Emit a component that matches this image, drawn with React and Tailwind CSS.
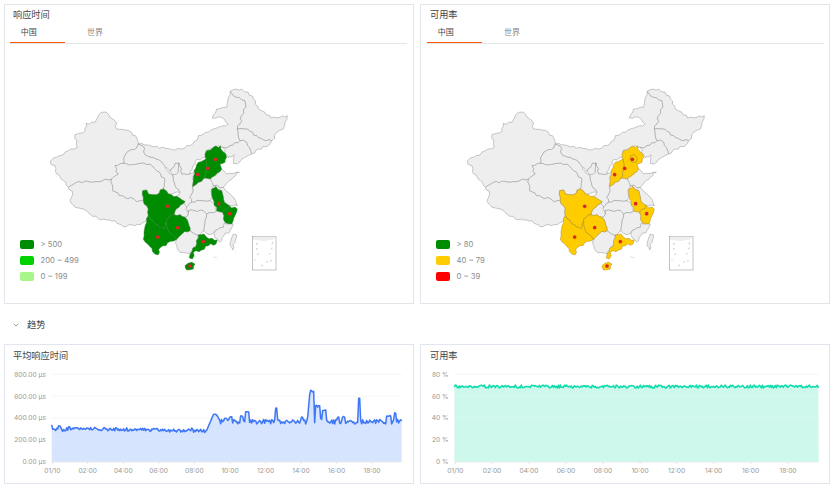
import React from 'react';
import { ChevronDown } from 'lucide-react';

const cjk = "font-['Inter','Noto_Sans_CJK_SC',sans-serif]";

// province outlines, coordinates are 3x page pixels
const provinces = {
  xinjiang: '152,480 160,472 178,465 205,450 232,440 225,402 255,392 258,368 285,365 292,352 305,335 318,334 330,350 345,360 350,385 375,388 395,395 410,412 415,430 410,442 388,450 375,465 370,488 345,495 355,520 335,535 280,545 262,542 230,545 205,560 190,540 170,520 165,495 152,490',
  tibet: '205,560 230,545 262,542 280,545 335,535 338,570 375,590 392,590 410,603 430,600 445,625 445,645 438,662 420,672 395,672 370,678 345,660 320,658 295,655 270,640 250,625 225,620 210,600 218,580',
  qinghai: '345,495 370,488 395,492 420,488 450,490 470,510 482,520 495,540 490,565 470,582 445,580 440,568 428,570 430,600 410,603 392,590 375,590 338,570 335,535 355,520',
  gansu: '375,465 388,450 410,442 415,430 428,435 435,462 460,470 478,478 490,490 503,510 518,522 525,555 540,575 520,578 505,580 490,565 495,540 482,520 470,510 450,490 420,488 395,492 370,488',
  ningxia: '525,488 537,487 535,515 555,522 556,545 540,553 525,550 528,530 518,522 510,512',
  inner: '415,430 470,437 515,447 545,445 570,435 592,418 595,405 625,395 640,385 660,378 685,370 665,350 637,352 650,325 680,320 685,290 690,272 700,285 735,300 738,320 725,345 720,370 712,385 720,420 690,435 680,442 668,440 655,435 632,445 618,450 615,470 585,482 570,520 545,520 537,487 525,488 510,512 490,490 478,478 460,470 435,462 428,435',
  heilongjiang: '690,272 702,266 725,265 745,275 760,295 775,325 795,335 812,352 840,350 862,345 855,365 850,385 830,395 815,420 790,418 770,405 750,392 735,385 712,385 720,370 725,345 738,320 735,300 700,285',
  jilin: '712,385 735,385 750,392 770,405 790,418 815,420 805,435 775,445 755,460 748,440 740,425 720,420',
  liaoning: '680,442 690,435 720,420 740,425 748,440 755,460 735,470 712,490 700,488 702,462 688,468 685,472 668,440',
  shaanxi: '537,487 545,520 570,520 582,515 577,558 580,570 570,590 575,605 558,625 532,612 545,597 530,587 540,575 525,555 518,522 535,515',
  henan: '577,558 590,552 612,532 632,535 640,556 632,570 636,590 630,600 600,600 575,605 570,590 580,570',
  hubei: '555,625 575,605 600,600 630,600 640,605 650,632 620,640 610,630 565,630 565,640',
  jiangsu: '640,555 670,560 690,580 702,592 712,615 688,615 673,605 665,570 648,558',
  shandong: '635,530 665,505 680,520 718,515 700,530 682,545 670,560 640,555 632,535',
  hunan: '565,640 565,630 610,630 620,640 615,668 612,690 595,705 570,690 565,668 555,650',
  jiangxi: '620,640 650,632 668,632 680,668 670,680 645,690 630,702 612,690 615,668',
  fujian: '672,668 700,670 690,690 672,705 660,725 645,710 645,690 670,680',
  guangxi: '528,710 548,698 570,690 595,705 595,725 570,760 540,755 530,735',
  chongqing: '528,625 555,602 558,625 565,640 555,650 540,642 522,642',
  taiwan: '700,700 710,703 705,725 698,748 690,735 695,712',
};

// highlighted provinces drawn over the grey ones
const active = {
  hebei: '620,450 640,440 662,435 668,452 680,470 675,485 660,490 665,505 645,525 630,535 612,532 620,500 618,475 615,460',
  shanxi: '618,475 620,500 612,532 605,542 578,558 580,535 582,510 595,485',
  sichuan: '428,570 440,568 445,580 470,582 490,565 505,580 530,587 555,602 528,625 522,642 508,650 500,662 492,685 478,680 460,660 445,645 445,625 430,600',
  guizhou: '522,642 540,642 555,650 565,668 570,690 548,698 530,716 515,700 505,690 500,662 508,650',
  yunnan: '445,645 460,660 478,680 492,685 500,662 505,690 515,700 530,716 512,722 498,735 482,740 475,762 462,758 450,738 430,716 432,695 440,665',
  guangdong: '595,702 612,700 620,710 652,718 648,730 625,735 605,748 580,755 577,775 568,772 572,758 590,730',
  hainan: '555,795 575,785 585,790 580,805 560,808',
  anhui: '648,558 665,570 673,605 688,615 668,635 650,630 638,595 635,565',
  zhejiang: '688,615 712,625 705,645 695,670 675,665 668,635',
};

const dots = [[646, 476], [623, 503], [593, 522], [503, 617], [533, 681], [473, 709], [610, 723], [656, 609], [689, 639], [570, 796]];

// adds small wiggles to each edge; keyed on the edge so neighbours share the same border
const wiggle = (points) => {
  const pts = points.split(' ').map((p) => p.split(',').map(Number));
  const out = [];
  pts.forEach((a, i) => {
    const b = pts[(i + 1) % pts.length];
    const flip = a[0] > b[0] || (a[0] === b[0] && a[1] > b[1]);
    const [p, q] = flip ? [b, a] : [a, b];
    const len = Math.hypot(q[0] - p[0], q[1] - p[1]);
    const steps = Math.max(1, Math.round(len / 9));
    const seed = p[0] * 31 + p[1] * 17 + q[0] * 13 + q[1] * 7;
    const edge = [];
    for (let k = 1; k < steps; k++) {
      const t = k / steps;
      const off = Math.sin(seed + k * 2.7) * 2.6 + Math.sin(seed * 0.3 + k * 5.1) * 1.4;
      edge.push([p[0] + (q[0] - p[0]) * t - ((q[1] - p[1]) / len) * off, p[1] + (q[1] - p[1]) * t + ((q[0] - p[0]) / len) * off]);
    }
    if (flip) edge.reverse();
    out.push(a, ...edge);
  });
  return out.map(([x, y]) => `${x.toFixed(1)},${y.toFixed(1)}`).join(' ');
};

const ChinaMap = ({ fill, stroke, outline }) => (
  <svg viewBox="120 250 780 580" className="block w-[260px] h-[193.33px] ml-[30px] mt-[39.5px]">
    {Object.entries(provinces).map(([name, points]) => (
      <polygon key={name} points={wiggle(points)} fill="#eeeeee" stroke="#929292" strokeWidth="1.5" strokeLinejoin="round" />
    ))}
    {Object.entries(active).map(([name, points]) => (
      <polygon key={name} points={wiggle(points)} fill={fill} stroke={stroke} strokeWidth="1.3" strokeLinejoin="round" />
    ))}
    {outline && <polygon points="640,466 652,461 662,474 656,485 642,484" fill={fill} stroke={stroke} strokeWidth="1.4" />}
    <path d="M640 768l8 3M650 770l4 2M728 694l2 0M704 752l3 1" stroke="#bbbbbb" strokeWidth="1.5" fill="none" />
    <rect x="758" y="707" width="70" height="101" fill="#ffffff" stroke="#8f8f8f" strokeWidth="1.6" />
    <path d="M759 708h68v4l-10 6h-12l-8 3h-12l-8-2h-18z" fill="#eeeeee" />
    <path d="M771 727v6M770 742l1 5M776 758l-4 5M764 777l2 3M784 795l5-2M800 786l3-5M811 757l-3 5M816 741l-1 5M818 725l-2 6M812 783l2-5" stroke="#8f8f8f" strokeWidth="1.6" fill="none" />
    {dots.map(([x, y]) => <circle key={x} cx={x} cy={y} r="5.5" fill="#d8262a" />)}
  </svg>
);

const Legend = ({ items }) => (
  <div className="absolute left-[15px] top-[233px] flex flex-col gap-[3px]">
    {items.map(([color, label]) => (
      <div key={label} className="flex items-center h-[13px] gap-[7px]">
        <span className="w-[13.5px] h-[9.5px] rounded-[2px]" style={{ backgroundColor: color }} />
        <span className="text-[7.7px] text-[#8c8c8c] leading-none">{label}</span>
      </div>
    ))}
  </div>
);

const MapCard = ({ title, fill, stroke, legend, outline, right }) => (
  <div className={`relative h-[300px] w-[410px] border border-[#e3e5ea] pt-1 ${right ? 'pl-[6px] pr-[5px]' : 'pl-[5px] pr-[6px]'}`}>
    <h3 className="pl-[3px] text-[9.2px] leading-3 text-[#444444] font-normal">{title}</h3>
    <div className="flex h-[23px] border-b border-[#e3e5ea]">
      <div className="flex flex-col justify-between w-[55px] h-[22px] pt-[5px]">
        <span className="pl-[10.7px] text-[8px] leading-3 text-[#444444]">中国</span>
        <span className="block h-[1px] bg-[#ff5a00]" />
      </div>
      <div className="pl-[22px] pt-[5px] text-[8px] leading-3 text-[#888888]">世界</div>
    </div>
    <ChinaMap fill={fill} stroke={stroke} outline={outline} />
    <Legend items={legend} />
  </div>
);

// small seeded generator so the wave form stays the same on every load
const makeNoise = (seed) => {
  let s = seed;
  return () => {
    s = (s * 16807) % 2147483647;
    return s / 2147483647 - 0.5;
  };
};

const lerp = (x, x0, y0, x1, y1) => y0 + ((x - x0) * (y1 - y0)) / (x1 - x0);

const spikes = [[742, 302, 5], [725, 316, 4], [828, 292, 2], [907, 318, 3], [1015, 318, 3], [1032, 318, 4], [692, 318, 3], [677, 322, 3], [972, 298, 5], [1077, 262, 2], [1185, 307, 3], [1165, 315, 7], [575, 350, 2]];

const responseLine = () => {
  const noise = makeNoise(4711);
  const pts = [];
  for (let x = 155; x <= 1205; x += 3) {
    let y;
    if (x < 620) y = lerp(x, 155, 351, 620, 360) + noise() * (x < 210 ? 20 : 10);
    else if (x < 640) y = lerp(x, 620, 358, 640, 311);
    else if (x < 650) y = 310;
    else if (x < 662) y = lerp(x, 650, 312, 662, 332);
    else y = 332 + noise() * 14;
    spikes.forEach(([sx, sy, w]) => {
      if (Math.abs(x - sx) <= w) y = Math.min(y, sy + noise() * 3);
    });
    if (x >= 922 && x < 930) y = lerp(x, 922, 330, 930, 240);
    if (x >= 930 && x < 942) y = 240 + noise() * 8;
    if (x >= 942 && x < 945) y = 335;
    if (x >= 945 && x < 960) y = 286 + noise() * 8;
    if (x >= 960 && x < 965) y = 322;
    pts.push([x, y]);
  }
  return pts;
};

const availabilityLine = () => {
  const noise = makeNoise(90210);
  const pts = [];
  for (let x = 115; x <= 1208; x += 3) pts.push([x, 226.5 + noise() * 9]);
  return pts;
};

const TrendChart = ({ points, x0, x1, yLabels, xLabels, line, area }) => {
  const d = points.map(([x, y]) => `${x},${y.toFixed(1)}`).join(' ');
  const ys = [190, 256, 321, 387, 453];
  return (
    <svg viewBox="15 156 1224 360" className="block w-[408px] h-[120px] mt-[1px]">
      {ys.map((y) => <line key={y} x1={x0} x2={x1} y1={y} y2={y} stroke="#f0f0f0" strokeWidth="2" />)}
      <polygon points={`${x0},453 ${d} ${x1},453`} fill={area} />
      {ys.slice(1, -1).map((y) => <line key={y} x1={x0} x2={x1} y1={y} y2={y} stroke="#ffffff" strokeOpacity="0.25" strokeWidth="2" />)}
      <polyline points={d} fill="none" stroke={line} strokeWidth="4.6" strokeLinejoin="round" />
      <line x1={x0} x2={x1} y1="453" y2="453" stroke="#e8e8e8" strokeWidth="2" />
      {yLabels.map((t, i) => (
        <text key={t} x={x0 - 17} y={ys[i] + 7} textAnchor="end" fontSize="20" fill="#999999" fontFamily="Inter, sans-serif">{t}</text>
      ))}
      {xLabels.map(([t, x]) => (
        <g key={t}>
          <line x1={x} x2={x} y1="453" y2="459" stroke="#dddddd" strokeWidth="2" />
          <text x={x} y="485" textAnchor="middle" fontSize="20" fill="#999999" fontFamily="Inter, sans-serif">{t}</text>
        </g>
      ))}
    </svg>
  );
};

const ChartCard = ({ title, right, children }) => (
  <div className="h-[140px] w-[410px] border border-[#e3e4ee] pt-[5px]">
    <h3 className={`text-[9.2px] leading-3 text-[#444444] font-normal ${right ? 'pl-[9px]' : 'pl-[8px]'}`}>{title}</h3>
    {children}
  </div>
);

const names = ['01/10', '02:00', '04:00', '06:00', '08:00', '10:00', '12:00', '14:00', '16:00', '18:00'];
const leftTicks = [157, 263, 370, 476, 583, 690, 797, 903, 1010, 1116];
const rightTicks = [118, 228, 339, 450, 561, 672, 782, 893, 1004, 1116];

const App = () => (
  <div className={`w-[833px] h-[488px] overflow-hidden bg-white pt-1 pl-1 ${cjk}`}>
    <div className="flex gap-[6px]">
      <MapCard
        title="响应时间"
        fill="#008c00"
        stroke="#2c7a2c"
        legend={[['#008c00', '> 500'], ['#00d200', '200 ~ 499'], ['#a8f58a', '0 ~ 199']]}
      />
      <MapCard
        title="可用率"
        fill="#ffcc00"
        stroke="#9a7b20"
        outline
        right
        legend={[['#008c00', '> 80'], ['#ffcc00', '40 ~ 79'], ['#ff0000', '0 ~ 39']]}
      />
    </div>
    <div className="flex items-center h-[40px] pt-[2px] pl-[8px] gap-[7px]">
      <ChevronDown size={8} className="text-[#666666]" />
      <span className="text-[9.2px] text-[#444444]">趋势</span>
    </div>
    <div className="flex gap-[6px]">
      <ChartCard title="平均响应时间">
        <TrendChart
          points={responseLine()}
          x0={155}
          x1={1205}
          yLabels={['800.00 µs', '600.00 µs', '400.00 µs', '200.00 µs', '0.00 µs']}
          xLabels={names.map((n, i) => [n, leftTicks[i]])}
          line="#3f78f6"
          area="#d7e4fd"
        />
      </ChartCard>
      <ChartCard title="可用率" right>
        <TrendChart
          points={availabilityLine()}
          x0={115}
          x1={1208}
          yLabels={['80 %', '60 %', '40 %', '20 %', '0 %']}
          xLabels={names.map((n, i) => [n, rightTicks[i]])}
          line="#0bdcaa"
          area="#cff8ec"
        />
      </ChartCard>
    </div>
  </div>
);

export default App;
